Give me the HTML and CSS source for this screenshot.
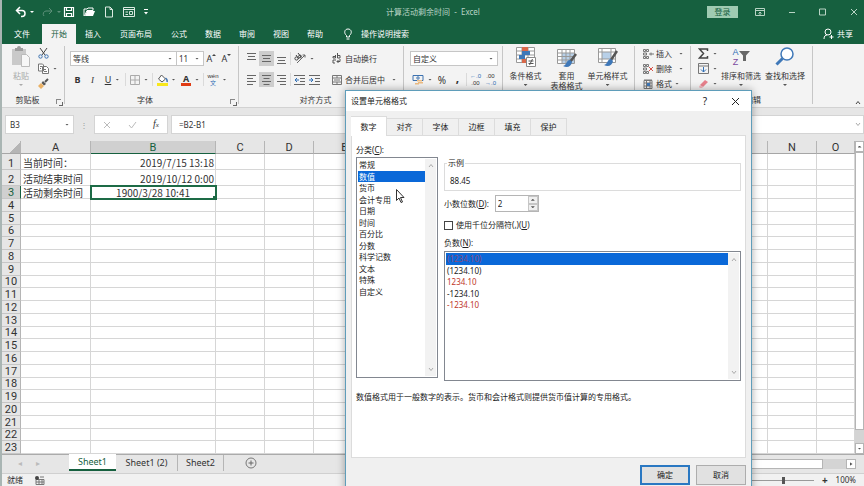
FILE: index.html
```html
<!DOCTYPE html>
<html lang="zh-CN">
<head>
  <meta charset="UTF-8">
  <title>计算活动剩余时间 - Excel</title>
  <link rel="stylesheet" href="styles.css">
</head>
<body>
  <div class="app">
    <header class="titlebar">
      <div class="quick">
        <button aria-label="撤消"><svg width="12" height="12" viewBox="0 0 12 12"><path d="M5 1 1.500 4.500 5 8M2 4.500h5a3 3 0 0 1 0 6H6" stroke="#fff" stroke-width="1.500"/></svg><i class="caret"></i></button>
        <button class="faded" aria-label="恢复"><svg width="12" height="12" viewBox="0 0 12 12"><path d="M7 2l3 3-3 3M10 5H4a3 3 0 0 0-2 5" stroke="#fff"/></svg><i class="caret"></i></button>
        <button aria-label="保存"><svg width="12" height="12" viewBox="0 0 12 12"><path d="M1.500 1.500h9v9h-9zM3.500 1.500v3h5v-3M3.500 10.500v-3h5v3" stroke="#fff" stroke-width="1.200"/></svg></button>
        <button aria-label="打开"><svg width="12" height="12" viewBox="0 0 12 12"><path d="M1 10V3h3l1-1h5v2.500H4L1.500 10" stroke="#fff"/><path d="M4 5h8l-2 5H2z" fill="#fff"/></svg></button>
        <button aria-label="新建"><svg width="12" height="12" viewBox="0 0 12 12"><path d="M2.500 1h4.500l2.500 2.500V11h-7zM7 1v2.500h2.500" stroke="#dcebe2"/></svg></button>
        <button aria-label="窗体"><svg width="12" height="12" viewBox="0 0 12 12"><path d="M.5 1.500h11v9H.5zM.5 3.500h11M2.500 6H5M2.500 8.500H5" stroke="#dcebe2"/><path d="M6.500 5.500h3v3h-3z" stroke="#cfe3d8"/></svg></button>
        <button aria-label="自定义快速访问工具栏"><svg width="6" height="8" viewBox="0 0 6 8"><path d="M1 1.500h4" stroke="#fff"/><path d="M1 4h4L3 6.500z" fill="#fff"/></svg></button>
      </div>
      <div class="doc-name">计算活动剩余时间&nbsp; -&nbsp; Excel</div>
      <div class="window-buttons">
        <button class="login">登录</button>
        <button aria-label="功能区显示选项"><svg width="10" height="10" viewBox="0 0 10 10"><path d="M.5 1.500h9v7h-9zM.5 3.500h9M5 8V5M3.500 6.500 5 5l1.500 1.500" stroke="#b9d4c5"/></svg></button>
        <button aria-label="最小化"><svg width="8" height="10" viewBox="0 0 8 10"><path d="M1 5.500h6" stroke="#b9d4c5"/></svg></button>
        <button aria-label="最大化"><svg width="8" height="10" viewBox="0 0 8 10"><path d="M.5 2h6v6h-6z" stroke="#b9d4c5"/></svg></button>
        <button aria-label="关闭"><svg width="8" height="10" viewBox="0 0 8 10"><path d="m1 2 6 6M7 2 1 8" stroke="#b9d4c5"/></svg></button>
      </div>
    </header>

    <nav class="menu">
      <a href="#">文件</a>
      <a href="#" class="active">开始</a>
      <a href="#">插入</a>
      <a href="#" class="long">页面布局</a>
      <a href="#">公式</a>
      <a href="#">数据</a>
      <a href="#">审阅</a>
      <a href="#">视图</a>
      <a href="#">帮助</a>
      <a href="#" class="tell"><svg width="10" height="12" viewBox="0 0 10 12"><path d="M3.500 9V7.500C.5 5 1.500 1 5 1s4.500 4 1.500 6.500V9zM3.500 11h3" stroke="#fff"/></svg>操作说明搜索</a>
      <a href="#" class="share"><svg width="11" height="12" viewBox="0 0 11 12"><path d="M5 1a2.800 2.800 0 1 1 0 6 2.800 2.800 0 0 1 0-6zM1 11c0-3 1.500-4 3-4M8.500 7v4M6.500 9h4" stroke="#fff"/></svg>共享</a>
    </nav>

    <div class="ribbon">
      <section class="group clipboard">
        <div class="tools">
          <button class="big faded-text"><svg width="20" height="22" viewBox="0 0 20 22"><path d="M1 3h14v16H1z" fill="#c9c9c9"/><path d="M4 2h2a2 2 0 0 1 4 0h2v3H4z" fill="#9d9d9d"/><path d="M10.500 8.500h5l3 3v9h-8z" fill="#f7f7f7" stroke="#bbb"/></svg>粘贴<i class="caret"></i></button>
          <div class="stack">
            <button aria-label="剪切"><svg width="11" height="11" viewBox="0 0 11 11"><path d="m2 0 5 7M9 0 4 7" stroke="#444"/><circle cx="2.500" cy="8.500" r="1.700" stroke="#3c72b0"/><circle cx="8.500" cy="8.500" r="1.700" stroke="#3c72b0"/></svg></button>
            <button aria-label="复制"><svg width="11" height="11" viewBox="0 0 11 11"><path d="M.5 1h4l1 1v6h-5zM4.500 3.500h4l2 2v5h-6zM6 6.500h2M6 8.500h3M2 3.500h2M2 5.500h1" stroke="#777" fill="#fff"/></svg><i class="caret"></i></button>
            <button aria-label="格式刷"><svg width="11" height="11" viewBox="0 0 11 11"><path d="m10 1-3 3" stroke="#555" stroke-width="2"/><path d="m5 3 3 3-2 1.500L3.500 5z" fill="#555"/><path d="m3 5 3 3-3 3-3-3z" fill="#eab165"/></svg></button>
          </div>
        </div>
        <h2>剪贴板</h2><i class="launcher"></i>
      </section>

      <section class="group font">
        <div class="tools rows">
          <div class="row">
            <label class="combo face"><select aria-label="字体"><option>等线</option></select><i class="caret"></i></label>
            <label class="combo size"><select aria-label="字号"><option>11</option></select><i class="caret"></i></label>
            <button class="letter grow">A<svg width="4" height="12" viewBox="0 0 4 12"><path d="M0 3h4L2 1z" fill="#444"/></svg></button>
            <button class="letter shrink">A<svg width="4" height="12" viewBox="0 0 4 12"><path d="M0 1h4L2 3z" fill="#444"/></svg></button>
          </div>
          <div class="row second">
            <button class="letter"><b>B</b></button>
            <button class="letter italic">I</button>
            <button class="letter wide"><u>U</u><i class="caret"></i></button>
            <i class="rule"></i>
            <button class="wide" aria-label="边框"><svg width="10" height="10" viewBox="0 0 10 10"><path d="M.5.5h9v9h-9zM5 .5v9M.5 5h9" stroke="#aaa"/></svg><i class="caret"></i></button>
            <i class="rule"></i>
            <button class="wide" aria-label="填充颜色"><svg width="11" height="12" viewBox="0 0 11 12"><path d="m4.500 1 4 4L5 8 1.500 5z" fill="#fff" stroke="#555"/><path d="M8.500 4c1.500 1 2 2 1.500 4" stroke="#3c72b0" stroke-width="1.500"/><path d="M0 9h11v3H0z" fill="#f8e71c"/></svg><i class="caret"></i></button>
            <button class="wide font-color"><span>A</span><i class="caret"></i></button>
            <i class="rule"></i>
            <button class="wide pinyin"><span>wén<br><em>文</em></span><i class="caret"></i></button>
          </div>
        </div>
        <h2>字体</h2><i class="launcher"></i>
      </section>

      <section class="group align">
        <div class="tools rows">
          <div class="row">
            <button aria-label="顶端对齐"><svg width="11" height="11" viewBox="0 0 11 11"><path d="M1 .5h9M2 3.500h7M1 6.500h9" stroke="#666"/></svg></button>
            <button class="on" aria-label="垂直居中"><svg width="11" height="11" viewBox="0 0 11 11"><path d="M1 2.500h9M2 5.500h7M1 8.500h9" stroke="#666"/></svg></button>
            <button aria-label="底端对齐"><svg width="11" height="11" viewBox="0 0 11 11"><path d="M1 4.500h9M2 7.500h7M1 10.500h9" stroke="#666"/></svg></button>
            <i class="rule"></i>
            <button class="wide" aria-label="方向"><svg width="12" height="11" viewBox="0 0 12 11"><path d="m3 10 8-8M8.500 2H11v2.500" stroke="#666"/><circle cx="2.500" cy="5.500" r="1.600" stroke="#444"/><circle cx="6" cy="3.500" r="1.400" stroke="#444"/><path d="m2 2 3 4M4 0l3 4" stroke="#444"/></svg><i class="caret"></i></button>
            <button class="text wrap"><svg width="10" height="11" viewBox="0 0 10 11"><path d="M3.500 2v3H1V3.500h2.500M5.500 0v5H8V2.500H5.500M4 7H1v3h2M8 6v2.500H5M6.500 7 5 8.500 6.500 10" stroke="#555"/></svg>自动换行</button>
          </div>
          <div class="row second">
            <button aria-label="左对齐"><svg width="11" height="11" viewBox="0 0 11 11"><path d="M1 1.500h9M1 4.500h6M1 7.500h9M1 10.500h6" stroke="#666"/></svg></button>
            <button class="on" aria-label="居中"><svg width="11" height="11" viewBox="0 0 11 11"><path d="M1 1.500h9M2.500 4.500h6M1 7.500h9M2.500 10.500h6" stroke="#666"/></svg></button>
            <button aria-label="右对齐"><svg width="11" height="11" viewBox="0 0 11 11"><path d="M1 1.500h9M4 4.500h6M1 7.500h9M4 10.500h6" stroke="#666"/></svg></button>
            <i class="rule"></i>
            <button aria-label="减少缩进量"><svg width="11" height="11" viewBox="0 0 11 11"><path d="M0 1.500h11M6 4.500h5M6 7.500h5M0 10.500h11" stroke="#666"/><path d="M1 6h4M3 4 1 6l2 2" stroke="#2f6eb5"/></svg></button>
            <button aria-label="增加缩进量"><svg width="11" height="11" viewBox="0 0 11 11"><path d="M0 1.500h11M6 4.500h5M6 7.500h5M0 10.500h11" stroke="#666"/><path d="M0 6h4M2 4l2 2-2 2" stroke="#2f6eb5"/></svg></button>
            <button class="text merge"><svg width="10" height="10" viewBox="0 0 10 10"><path d="M.5.5h9v9h-9zM.5 3h9M.5 7h9M5 .5V3M5 7v2.500M2 5h6" stroke="#777"/></svg>合并后居中<i class="caret"></i></button>
          </div>
        </div>
        <h2>对齐方式</h2>
      </section>

      <section class="group number">
        <div class="tools rows">
          <div class="row">
            <label class="combo format"><select aria-label="数字格式"><option>自定义</option></select><i class="caret"></i></label>
          </div>
          <div class="row second">
            <button class="wide" aria-label="会计数字格式"><svg width="12" height="11" viewBox="0 0 12 11"><path d="M1 1.500h10v5H1z" stroke="#3c72b0"/><circle cx="6" cy="4" r="1.200" stroke="#3c72b0"/><path d="M5 6h5v1.500H5zM6 8h5v1.500H6zM3 9h4v1.500H3z" fill="#eebd83"/></svg><i class="caret"></i></button>
            <button class="percent">%</button>
            <button class="comma">,</button>
            <i class="rule"></i>
            <button class="digits"><em>←.0</em><span>.00</span></button>
            <button class="digits"><span>.00</span><em>→.0</em></button>
          </div>
        </div>
      </section>

      <section class="group styles">
        <div class="tools">
          <button class="big"><svg width="20" height="22" viewBox="0 0 20 22"><path d="M.5 1.500h18v15H.5z" fill="#fff"/><path d="M.5 1.500h18v15H.5zM.5 5h18M.5 9h18M.5 13h18M6 1v16M12 1v16" stroke="#999"/><path d="M6 1h6v4H6zM6 13h5v4H6z" fill="#d9694a"/><path d="M6 5h8v4H6zM3 9h6v4H3z" fill="#3f78b8"/><path d="M10.500 11.500h9v9h-9z" fill="#fff" stroke="#888"/><path d="M12.500 15h5M12.500 17.500h5M16.500 13l-3 6" stroke="#555"/></svg>条件格式<i class="caret"></i></button>
          <button class="big two-line"><svg width="20" height="22" viewBox="0 0 20 22"><path d="M.5 2.500h17v14H.5z" fill="#fff"/><path d="M5 6h12v10H5z" fill="#b8d0e8"/><path d="M.5 2.500h17v14H.5zM.5 6h17M.5 9.500h17M.5 13h17M5 2v14M9 2v14M13 2v14" stroke="#999"/><path d="m19 7-6 8" stroke="#555" stroke-width="2.500"/><path d="M13 13c-4 0-3 5-7 6 4 2 8 1 9-4z" fill="#3f78b8"/></svg>套用<br>表格格式</button>
          <button class="big"><svg width="20" height="22" viewBox="0 0 20 22"><path d="M.5 2.500h17v14H.5z" fill="#fff"/><path d="M4 6h9v7H4z" fill="#b8d0e8"/><path d="M.5 2.500h17v14H.5zM.5 6h17M.5 13h17M4 2v14M13 2v14" stroke="#999"/><path d="m19 5-6 9" stroke="#555" stroke-width="2.500"/><path d="M13 13c-4 0-3 5-7 6 4 2 8 1 9-4z" fill="#3f78b8"/></svg>单元格样式<i class="caret"></i></button>
        </div>
      </section>

      <section class="group cells">
        <div class="tools stack">
          <button class="text"><svg width="11" height="10" viewBox="0 0 11 10"><path d="M.5.5h2v2h-2zM3.500.5h2v2h-2zM.5 7.500h2v2h-2zM3.500 7.500h2v2h-2zM.5 4h3v2h-3zM6 5h5M8 3.500v3" stroke="#777"/></svg>插入<i class="caret"></i></button>
          <button class="text"><svg width="11" height="10" viewBox="0 0 11 10"><path d="M.5.5h2v2h-2zM3.500.5h2v2h-2zM.5 7.500h2v2h-2zM3.500 7.500h2v2h-2zM.5 4h3v2h-3z" stroke="#777"/><path d="m6 3 4 4M10 3 6 7" stroke="#d9534a"/></svg>删除<i class="caret"></i></button>
          <button class="text"><svg width="11" height="10" viewBox="0 0 11 10"><path d="M1 1.500h8v8H1zM1 4h8M1 7h8M3.500 1.500v8M7 1.500v8M1 0h8" stroke="#777"/><path d="M4 4h3v3H4z" fill="#3f78b8"/></svg>格式<i class="caret near"></i></button>
        </div>
      </section>

      <section class="group edit">
        <div class="tools">
          <div class="stack">
            <button aria-label="自动求和"><svg width="11" height="11" viewBox="0 0 11 11"><path d="M9.500 3V1h-8l4 4.500-4 4.500h8V8" stroke="#444" stroke-width="1.500"/></svg><i class="caret"></i></button>
            <button aria-label="填充"><svg width="11" height="11" viewBox="0 0 11 11"><path d="M.5.5h10v10H.5zM.5 3h10" stroke="#777"/><path d="M5.500 4v5M3 6.500 5.500 9 8 6.500" stroke="#2f6eb5"/></svg><i class="caret"></i></button>
            <button aria-label="清除"><svg width="11" height="11" viewBox="0 0 11 11"><path d="m7 2 3 2-5 5-3-2z" fill="#e8808c"/><path d="m2 7 3 2-1 1H2L1 9z" fill="#f4b6bd"/></svg><i class="caret"></i></button>
          </div>
          <button class="big"><span class="sort"><span>A<br><em>Z</em></span><svg width="11" height="12" viewBox="0 0 11 12"><path d="M0 1h11L7 5.500V11H4V5.500z" fill="#666"/></svg></span>排序和筛选<i class="caret"></i></button>
          <button class="big"><svg width="20" height="22" viewBox="0 0 20 22"><circle cx="12" cy="8" r="6" fill="#fff" stroke="#3f78b8" stroke-width="1.500"/><path d="m7.500 12.500-6 6" stroke="#3f78b8" stroke-width="3"/></svg>查找和选择<i class="caret"></i></button>
        </div>
        <h2>编辑</h2>
      </section>

      <button class="collapse" aria-label="折叠功能区"><svg width="6" height="5" viewBox="0 0 6 5"><path d="m1 4 2-2.500L5 4" stroke="#444"/></svg></button>
    </div>

    <div class="formula-bar">
      <label class="name-box"><input type="text" value="B3" aria-label="名称框"><i class="caret"></i></label>
      <span class="grip">⋮</span>
      <div class="fx">
        <button aria-label="取消"><svg width="8" height="8" viewBox="0 0 8 8"><path d="m1 1 6 6M7 1 1 7" stroke="#bbb"/></svg></button>
        <button aria-label="输入"><svg width="9" height="8" viewBox="0 0 9 8"><path d="m1 4 2.500 3L8 1" stroke="#bbb"/></svg></button>
        <button class="fx-mark"><i>f<small>x</small></i></button>
      </div>
      <label class="formula"><input type="text" value="=B2-B1" aria-label="编辑栏"><svg width="6" height="5" viewBox="0 0 6 5"><path d="m1 1 2 2.500L5 1" stroke="#aaa"/></svg></label>
    </div>

    <main class="workspace">
      <div class="sheet-wrap">
        <table class="sheet">
          <colgroup>
            <col class="col-num"><col class="col-a"><col class="col-b"><col span="2" class="col-std"><col class="col-e"><col span="9" class="col-std"><col>
          </colgroup>
          <thead>
            <tr><th class="corner"></th><th>A</th><th class="selected">B</th><th>C</th><th>D</th><th>E</th><th>F</th><th>G</th><th>H</th><th>I</th><th>J</th><th>K</th><th>L</th><th>M</th><th>N</th><th>O</th></tr>
          </thead>
          <tbody id="rows"></tbody>
        </table>
      </div>
      <div class="vscroll">
        <button aria-label="向上滚动"><i class="caret up"></i></button>
        <div class="thumb"></div>
        <button aria-label="向下滚动"><i class="caret"></i></button>
      </div>
    </main>

    <footer class="sheet-tabs">
      <div class="tab-arrows"><span>◂</span><span>▸</span></div>
      <button class="current">Sheet1</button>
      <button class="two">Sheet1 (2)</button>
      <button>Sheet2</button>
      <button class="add" aria-label="新工作表"><svg width="12" height="12" viewBox="0 0 12 12"><circle cx="6" cy="6" r="5" stroke="#777"/><path d="M3.500 6h5M6 3.500v5" stroke="#666"/></svg></button>
      <div class="hscroll"><div class="thumb"></div><button aria-label="向右滚动"><i class="caret right"></i></button></div>
    </footer>

    <div class="status">
      <span>就绪</span>
      <svg width="10" height="9" viewBox="0 0 10 9"><path d="M1 3.500h8v5H1zM1 6h8M4 3v5M7 3v5M5 1h4" stroke="#777"/><circle cx="2" cy="2" r="2" fill="#444"/></svg>
      <div class="zoom"><input type="range" min="0" max="200" value="112" aria-label="显示比例"><b>+</b><span>100%</span></div>
    </div>
  </div>

  <div class="dialog" role="dialog" aria-label="设置单元格格式">
    <div class="dialog-title">
      <span>设置单元格格式</span>
      <button class="help">?</button>
      <button aria-label="关闭"><svg width="9" height="9" viewBox="0 0 9 9"><path d="m1 1 7 7M8 1 1 8" stroke="#222"/></svg></button>
    </div>
    <div class="dialog-tabs">
      <button class="current">数字</button>
      <button>对齐</button>
      <button>字体</button>
      <button>边框</button>
      <button>填充</button>
      <button>保护</button>
    </div>
    <div class="pane">
      <div class="columns">
        <div class="category">
          <label for="category">分类(<u>C</u>):</label>
          <div class="listbox">
            <select id="category" size="12">
              <option>常规</option>
              <option selected>数值</option>
              <option>货币</option>
              <option>会计专用</option>
              <option>日期</option>
              <option>时间</option>
              <option>百分比</option>
              <option>分数</option>
              <option>科学记数</option>
              <option>文本</option>
              <option>特殊</option>
              <option>自定义</option>
            </select>
            <div class="bar"><svg width="6" height="5" viewBox="0 0 6 5"><path d="m1 4 2-2.500L5 4" stroke="#aaa"/></svg><svg width="6" height="5" viewBox="0 0 6 5"><path d="m1 1 2 2.500L5 1" stroke="#aaa"/></svg></div>
          </div>
        </div>
        <div class="details">
          <fieldset>
            <legend>示例</legend>
            <output>88.45</output>
          </fieldset>
          <div class="decimals">
            <label for="decimals">小数位数(<u>D</u>):</label>
            <div class="spinner">
              <input type="text" id="decimals" value="2">
              <div class="steps"><button aria-label="增加"><i class="caret up"></i></button><button aria-label="减少"><i class="caret"></i></button></div>
            </div>
          </div>
          <label class="thousands"><input type="checkbox"><span>使用千位分隔符(,)(<u>U</u>)</span></label>
          <label for="negative" class="negative-label">负数(<u>N</u>):</label>
          <div class="listbox">
            <select id="negative" size="5">
              <option class="red" selected>(1234.10)</option>
              <option>(1234.10)</option>
              <option class="red">1234.10</option>
              <option>-1234.10</option>
              <option class="red">-1234.10</option>
            </select>
            <div class="bar"><svg width="6" height="5" viewBox="0 0 6 5"><path d="m1 4 2-2.500L5 4" stroke="#aaa"/></svg><svg width="6" height="5" viewBox="0 0 6 5"><path d="m1 1 2 2.500L5 1" stroke="#aaa"/></svg></div>
          </div>
        </div>
      </div>
      <p>数值格式用于一般数字的表示。货币和会计格式则提供货币值计算的专用格式。</p>
    </div>
    <div class="dialog-buttons">
      <button class="ok">确定</button>
      <button>取消</button>
    </div>
  </div>

  <svg class="pointer" width="9" height="14" viewBox="0 0 9 14"><path d="M.5.5v11L3 9l2 4.500 1.500-.5-2-4.500H8z" fill="#fff" stroke="#333"/></svg>

  <script src="script.js"></script>
</body>
</html>
```

FILE: script.js
```js
// 单元格内容：行号 -> [A, B]
const data = {
  1: ["当前时间：", "2019/7/15 13:18"],
  2: ["活动结束时间", "2019/10/12 0:00"],
  3: ["活动剩余时间", "1900/3/28 10:41"]
};
const body = document.getElementById("rows");

for (let r = 1; r <= 23; r++) {
  const tr = document.createElement("tr");
  const th = document.createElement("th");
  th.textContent = r;
  tr.appendChild(th);
  for (let c = 0; c < 15; c++) {
    const td = document.createElement("td");
    if (data[r] && data[r][c]) td.textContent = data[r][c];
    tr.appendChild(td);
  }
  if (r < 3) tr.className = "tall";
  if (r === 3) {
    tr.className = "active-row";
    tr.cells[2].className = "active-cell";
  }
  body.appendChild(tr);
}
```

FILE: styles.css
```css
* {
  box-sizing: border-box;
}
body {
  margin: 0;
  overflow: hidden;
  font-family: "Noto Sans", "Noto Sans CJK SC", sans-serif;
  font-size: 8px;
  line-height: 12px;
  color: #333;
}
button, input, select {
  font: inherit;
  color: inherit;
  margin: 0;
  padding: 0;
  border: none;
  background: none;
  border-radius: 0;
  outline: none;
}
button {
  display: flex;
  align-items: center;
  justify-content: center;
  white-space: nowrap;
}
select {
  appearance: none;
}
svg {
  fill: none;
  flex: none;
}
.app {
  display: flex;
  flex-direction: column;
  height: 100vh;
  border-left: 2px solid #a9b5b3;
  background: #e6e6e6;
}
.caret {
  flex: none;
  width: 4px;
  height: 2px;
  background: #555;
  clip-path: polygon(0 0, 100% 0, 50% 100%);
}
.caret.up {
  clip-path: polygon(50% 0, 100% 100%, 0 100%);
}
.caret.right {
  width: 3px;
  height: 4px;
  clip-path: polygon(0 0, 100% 50%, 0 100%);
}

/* Title bar */
.titlebar {
  display: grid;
  grid-template-columns: 1fr auto 1fr;
  align-items: center;
  height: 24px;
  background: #16603f;
  color: #b9d4c5;
}
.quick {
  display: flex;
  align-items: center;
  gap: 8px;
  padding-left: 13px;
}
.quick button {
  gap: 3px;
}
.quick .caret {
  background: #fff;
}
.quick .faded {
  margin-right: -6px;
  opacity: 0.3;
}
.window-buttons {
  display: flex;
  justify-content: flex-end;
  align-items: center;
  gap: 23px;
  padding-right: 6px;
}
.login {
  width: 31px;
  height: 12px;
  margin-right: -6px;
  background: #9fcbb2;
  color: #16603f;
}

/* Menu */
.menu {
  display: flex;
  height: 20px;
  background: #16603f;
}
.menu a {
  display: flex;
  align-items: center;
  justify-content: center;
  width: 34px;
  color: #fff;
  text-decoration: none;
  white-space: nowrap;
}
.menu a:first-child {
  width: 40px;
}
.menu .active {
  background: #f3f3f3;
  color: #16603f;
}
.menu .long {
  width: 52px;
}
.menu .tell {
  width: auto;
  gap: 8px;
  margin-left: 11px;
}
.menu .share {
  width: auto;
  gap: 3px;
  margin-left: auto;
  margin-right: 11px;
}

/* Ribbon */
.ribbon {
  display: flex;
  height: 64px;
  background: #f3f3f3;
  border-bottom: 1px solid #d2d2d2;
}
.group {
  position: relative;
  display: flex;
  flex-direction: column;
  flex: none;
  padding-top: 2px;
}
.group::after {
  content: "";
  position: absolute;
  right: 0;
  top: 2px;
  bottom: 3px;
  border-right: 1px solid #c6c6c6;
}
.group h2 {
  margin: 0;
  font-size: 8px;
  font-weight: normal;
  line-height: 12px;
  text-align: center;
}
.tools {
  display: flex;
  height: 48px;
}
.clipboard { width: 63px; }
.font { width: 174px; }
.align { width: 165px; }
.number { width: 99px; }
.styles { width: 132px; }
.cells { width: 56px; }
.edit { width: 122px; }
.clipboard h2 {
  padding-right: 12px;
}
.font h2 {
  padding-right: 14px;
}
.align h2 {
  padding-right: 12px;
}
.font .tools {
  padding-left: 5px;
}
.launcher {
  position: absolute;
  right: 4px;
  bottom: 3px;
  width: 5px;
  height: 5px;
  border: 1px solid #888;
  border-right: none;
  border-bottom: none;
}
.launcher::after {
  content: "";
  position: absolute;
  left: 2px;
  top: 2px;
  width: 3px;
  height: 3px;
  border-right: 1px solid #666;
  border-bottom: 1px solid #666;
}
.big {
  flex-direction: column;
  justify-content: flex-start;
}
.big .caret {
  margin-top: 2px;
}
.big svg {
  margin-bottom: 2px;
}
.two-line {
  line-height: 10px;
  padding-top: 1px;
}
.faded-text {
  color: #aaa;
}
.clipboard .big {
  width: 36px;
  padding-left: 2px;
}
.faded-text .caret {
  background: #aaa;
}
.stack {
  flex-direction: column;
  display: flex;
  width: 20px;
}
.stack button {
  height: 15px;
  gap: 4px;
  justify-content: flex-start;
}
.rows {
  flex-direction: column;
}
.row {
  display: flex;
  align-items: center;
  height: 15px;
  margin-top: 5px;
}
.row.second {
  margin-top: 6px;
}
.row button {
  width: 15px;
  height: 15px;
}
.row button.wide {
  width: 24px;
  gap: 4px;
}
.rule {
  width: 1px;
  height: 13px;
  margin: 0 1px;
  background: #dadada;
}
.combo {
  display: flex;
  align-items: center;
  height: 15px;
  padding: 0 4px 0 2px;
  background: #fff;
  border: 1px solid #c6c6c6;
}
.combo select {
  flex: 1;
  min-width: 0;
}
.face {
  width: 107px;
}
.size {
  width: 28px;
  margin-left: -1px;
}
.row .letter {
  font-size: 9px;
  color: #333;
}
.italic {
  font-family: "Liberation Serif", serif;
  font-style: italic;
}
.font-color span {
  width: 10px;
  height: 12px;
  font-size: 9px;
  font-weight: bold;
  line-height: 10px;
  border-bottom: 3px solid #e03c14;
}
.pinyin {
  font-family: "Liberation Sans", "Noto Sans CJK SC", sans-serif;
  font-size: 6px;
  line-height: 7px;
}
.pinyin em {
  font-style: normal;
  color: #2f6eb5;
}
.align .tools {
  padding-left: 5px;
}
.on {
  background: #cdcdcd;
}
.row .text {
  width: auto;
  gap: 3px;
}
.row .wrap {
  margin-left: 16px;
}
.row .merge {
  margin-left: 10px;
}
.merge .caret {
  margin-left: 4px;
}
.number .tools {
  padding-left: 6px;
}
.format {
  width: 88px;
}
.row .percent {
  font-size: 10px;
  width: 16px;
}
.row .comma {
  width: 15px;
  font-size: 12px;
  font-weight: bold;
  padding-bottom: 4px;
}
.row .digits {
  flex-direction: column;
  font-family: "Liberation Sans", sans-serif;
  font-size: 6px;
  line-height: 7px;
}
.digits em {
  font-style: normal;
  color: #2f6eb5;
}
.styles .big {
  width: 41px;
}
.styles .tools {
  padding-left: 2px;
}
.cells .tools {
  width: auto;
  padding-left: 8px;
}
.cells button {
  gap: 2px;
}
.cells .caret {
  margin-left: 5px;
}
.cells .near {
  margin-left: 1px;
}
.edit .tools {
  padding-left: 7px;
}
.edit .stack {
  width: 21px;
}
.edit .big {
  width: 44px;
}
.edit h2 {
  padding-left: 2px;
}
.sort {
  display: flex;
  align-items: center;
  height: 22px;
  margin-bottom: 2px;
  font-family: "Liberation Sans", sans-serif;
  font-size: 9px;
  line-height: 10px;
  color: #2f6eb5;
}
.sort em {
  font-style: normal;
  color: #7b4aa0;
}
.collapse {
  margin: auto 3px 2px auto;
}

/* Formula bar */
.formula-bar {
  display: flex;
  align-items: center;
  height: 33px;
  padding-left: 3px;
}
.name-box, .fx, .formula {
  display: flex;
  align-items: center;
  height: 19px;
  background: #fff;
  border: 1px solid #d4d4d4;
}
.name-box {
  width: 69px;
  padding: 0 4px;
}
.name-box input, .formula input {
  flex: 1;
  min-width: 0;
}
.grip {
  width: 20px;
  text-align: center;
  color: #999;
}
.fx {
  width: 74px;
  justify-content: space-around;
}
.fx-mark {
  font-family: "Liberation Serif", serif;
  font-size: 10px;
}
.fx-mark small {
  font-size: 7px;
}
.formula {
  flex: 1;
  margin-left: 3px;
  padding: 0 2px 0 7px;
}

/* Sheet */
.workspace {
  display: flex;
  flex: 1;
  min-height: 0;
}
.sheet-wrap {
  flex: 1;
  min-width: 0;
}
.sheet {
  width: 100%;
  height: 100%;
  table-layout: fixed;
  border-collapse: separate;
  border-spacing: 0;
  background: #fff;
  font-family: "Noto Sans CJK SC", sans-serif;
  font-size: 10px;
  line-height: 11px;
}
.sheet th, .sheet td {
  padding: 0;
  border-right: 1px solid #d6d6d6;
  border-bottom: 1px solid #d6d6d6;
  white-space: nowrap;
  vertical-align: bottom;
}
.sheet th {
  background: #e6e6e6;
  font-family: Roboto, sans-serif;
  font-weight: normal;
  font-size: 11px;
  border-right-color: #b5b5b5;
}
.sheet tbody th {
  border-bottom-color: #c6c6c6;
}
.sheet thead th {
  height: 13px;
  border-bottom-color: #a6a6a6;
}
.sheet thead .selected {
  background: #d0d0d0;
  color: #16603f;
  border-bottom-color: #16603f;
}
.sheet .corner {
  background: linear-gradient(135deg, #e6e6e6 65%, #b5b5b5 65%);
}
.col-num { width: 19px; }
.col-a { width: 70px; }
.col-b { width: 125px; }
.col-std { width: 49px; }
.col-e { width: 62px; }
.tall td, .tall th {
  height: 16px;
}
.sheet .tall td {
  line-height: 13px;
}
.sheet td:nth-child(2) {
  padding-left: 2px;
}
.sheet td:nth-child(3) {
  text-align: right;
  padding-right: 1px;
}
.active-row td, .active-row th {
  height: 13px;
}
.sheet .active-row th {
  background: #d0d0d0;
  color: #16603f;
  border-right-color: #16603f;
}
.sheet td.active-cell:nth-child(3) {
  position: relative;
  padding-right: 25px;
  outline: 2px solid #1d6b46;
  outline-offset: -1px;
}
.active-cell::after {
  content: "";
  position: absolute;
  right: -2px;
  bottom: -2px;
  width: 4px;
  height: 4px;
  background: #1d6b46;
}
.vscroll {
  display: flex;
  flex-direction: column;
  width: 9px;
  background: #d4d4d4;
}
.vscroll button {
  height: 11px;
  background: #fff;
  border: 1px solid #b5b5b5;
}
.vscroll .thumb {
  flex: 1;
  margin-bottom: 13px;
  background: #fff;
  border: 1px solid #b5b5b5;
}

/* Sheet tabs and status */
.sheet-tabs {
  display: flex;
  height: 19px;
  padding-bottom: 2px;
  border-top: 1px solid #ababab;
  font-size: 9px;
}
.tab-arrows {
  display: flex;
  align-items: center;
  gap: 14px;
  width: 67px;
  padding-left: 16px;
  color: #bbb;
  font-size: 8px;
}
.sheet-tabs > button {
  width: 46px;
  border-right: 1px solid #b5b5b5;
}
.sheet-tabs > .current {
  width: 47px;
  margin-top: -1px;
  background: #fff;
  border-right: none;
  border-bottom: 2px solid #16603f;
  color: #16603f;
}
.sheet-tabs > .two {
  width: 62px;
}
.sheet-tabs > .add {
  width: 54px;
  border: none;
}
.hscroll {
  display: flex;
  align-items: center;
  flex: 1;
  margin: 4px 8px 2px 200px;
  background: #d4d4d4;
}
.hscroll .thumb {
  flex: 1;
  height: 10px;
  margin-right: 23px;
  background: #fff;
  border: 1px solid #b5b5b5;
}
.hscroll button {
  width: 10px;
  height: 10px;
  background: #fff;
  border: 1px solid #b5b5b5;
}
.status {
  display: flex;
  align-items: center;
  gap: 12px;
  height: 13px;
  padding: 0 8px 0 5px;
  background: #f1f1f1;
  border-top: 1px solid #d0d0d0;
}
.zoom {
  display: flex;
  align-items: center;
  gap: 8px;
  margin-left: auto;
}
.zoom input {
  appearance: none;
  width: 68px;
  height: 1px;
  background: #999;
}
.zoom input::-webkit-slider-thumb {
  appearance: none;
  width: 3px;
  height: 7px;
  background: #555;
}
.zoom b {
  font-size: 10px;
}

/* Format cells dialog */
.dialog {
  position: absolute;
  left: 345px;
  top: 90px;
  width: 407px;
  padding: 0 5px 9px;
  background: #f0f0f0;
  border: 1px solid #5f9dba;
  box-shadow: 0 0 8px rgba(0, 0, 0, 0.35);
  color: #222;
}
.dialog-title {
  display: flex;
  align-items: center;
  height: 20px;
  margin: 0 -5px;
  padding: 0 11px 0 5px;
  background: #fff;
}
.dialog-title span {
  flex: 1;
}
.dialog-title .help {
  margin-right: 24px;
  font-size: 10px;
}
.dialog-tabs {
  display: flex;
  height: 24px;
  padding-top: 7px;
}
.dialog-tabs button {
  width: 36px;
  border: 1px solid #dcdcdc;
  border-left: none;
  border-bottom: none;
}
.dialog-tabs .current {
  margin-top: -2px;
  margin-bottom: -1px;
  background: #fff;
}
.pane {
  height: 323px;
  padding: 8px 4px 0;
  background: #fff;
  border: 1px solid #dcdcdc;
}
.pane label {
  display: block;
}
.columns {
  display: flex;
  gap: 6px;
}
.category {
  width: 82px;
}
.details {
  flex: 1;
}
.listbox {
  display: flex;
  padding: 1px;
  border: 1px solid #828790;
}
.category .listbox {
  height: 221px;
  margin-top: 1px;
}
.details .listbox {
  height: 130px;
  margin-top: 2px;
}
.listbox select {
  flex: 1;
  min-width: 0;
  overflow: hidden;
}
.listbox option {
  height: 12px;
  min-height: 0;
  padding: 0 1px;
  line-height: 12px;
}
.listbox option:nth-child(even) {
  height: 11px;
  line-height: 11px;
}
.listbox option:checked {
  background: linear-gradient(#0a68d8, #0a68d8);
  -webkit-text-fill-color: #fff;
}
.listbox .red {
  color: #c0392b;
}
.listbox .red:checked {
  -webkit-text-fill-color: #8a4a78;
}
.bar {
  display: flex;
  flex-direction: column;
  align-items: center;
  justify-content: space-between;
  width: 11px;
  padding: 4px 0;
  background: #f2f2f2;
}
fieldset {
  height: 34px;
  margin: 13px 0 0;
  padding: 6px 5px 0;
  border: 1px solid #dcdcdc;
}
legend {
  padding: 0 1px;
  margin-left: -3px;
}
.decimals {
  display: flex;
  align-items: center;
  gap: 6px;
  margin-top: 4px;
}
.spinner {
  display: flex;
  width: 44px;
  height: 17px;
  border: 1px solid #b5b5b5;
}
.spinner input {
  flex: 1;
  min-width: 0;
  padding-left: 2px;
}
.steps {
  display: flex;
  flex-direction: column;
  width: 10px;
}
.steps button {
  flex: 1;
  background: #f0f0f0;
  border: 1px solid #c6c6c6;
}
.pane .thousands {
  display: flex;
  align-items: center;
  gap: 3px;
  margin-top: 7px;
}
.thousands input {
  appearance: none;
  width: 9px;
  height: 9px;
  background: #fff;
  border: 1px solid #444;
}
.pane .negative-label {
  margin-top: 6px;
}
.pane p {
  margin: 10px 0 0;
}
.dialog-buttons {
  display: flex;
  justify-content: flex-end;
  gap: 6px;
  padding-top: 7px;
}
.dialog-buttons button {
  width: 50px;
  height: 20px;
  background: #e1e1e1;
  border: 1px solid #adadad;
}
.dialog-buttons .ok {
  border: 2px solid #2a78c2;
}
.pointer {
  position: absolute;
  left: 396px;
  top: 189px;
}
```
